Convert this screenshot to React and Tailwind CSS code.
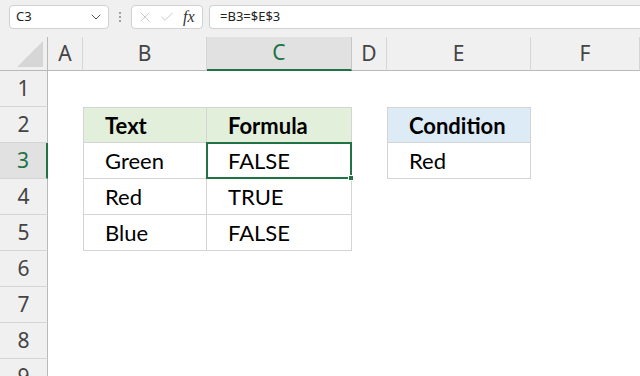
import { Fragment } from "react";
import { ChevronDown, X, Check } from "lucide-react";

const cols = ["A", "B", "C", "D", "E", "F"];
const colW = "grid-cols-[48px_35px_124px_145px_35px_144px_1fr]";

const tbl = "border-r border-b border-[#d4d4d4]";

function Cell({ children, className = "" }) {
  return (
    <div className={`flex items-center pl-[21px] text-[22px] text-black ${className}`}>
      {children}
    </div>
  );
}

function RowHead({ n, active }) {
  return (
    <div
      className={`flex items-center justify-center text-[21px] border-b ${
        active
          ? "bg-[#e1e1e1] text-[#217346] border-r-2 border-r-[#217346] border-b-[#d5d5d5]"
          : "bg-[#f0f0f0] text-[#444] border-r border-r-[#b9b9b9] border-b-[#d5d5d5]"
      }`}
    >
      {n}
    </div>
  );
}

export default function App() {
  const font = { fontFamily: "Lato, 'Noto Sans', sans-serif" };
  return (
    <div className="w-[640px] h-[376px] overflow-hidden bg-white" style={{ fontFamily: "'Noto Sans', 'Open Sans', sans-serif" }}>
      {/* formula bar */}
      <div className="h-[37px] bg-[#f0f0f0] flex items-start pt-[5px] pl-[9px]">
        <div className="w-[100px] h-[24px] bg-white border border-[#d1d1d1] rounded-[4px] flex items-center justify-between pl-[6px] pr-[4px]">
          <span className="text-[13px] text-[#222]">C3</span>
          <ChevronDown className="w-[16px] h-[16px] text-[#555]" strokeWidth={1.5} />
        </div>
        <div className="w-[22px] h-[24px] flex flex-col items-center justify-center gap-[2px]">
          <span className="w-[2px] h-[2px] bg-[#888] rounded-full"></span>
          <span className="w-[2px] h-[2px] bg-[#888] rounded-full"></span>
          <span className="w-[2px] h-[2px] bg-[#888] rounded-full"></span>
        </div>
        <div className="w-[72px] h-[24px] bg-white border border-[#d1d1d1] rounded-[4px] flex items-center pl-[5px] gap-[6px]">
          <X className="w-[16px] h-[16px] text-[#bdbdbd]" strokeWidth={1.2} />
          <Check className="w-[16px] h-[16px] text-[#bdbdbd]" strokeWidth={1.2} />
          <span className="text-[16px] italic text-[#333] ml-[2px]" style={{ fontFamily: "'Liberation Serif', serif" }}>fx</span>
        </div>
        <div className="ml-[6px] flex-1 h-[24px] bg-white border border-[#d1d1d1] border-r-0 rounded-l-[4px] flex items-center pl-[10px]">
          <span className="text-[13px] text-[#222]">=B3=$E$3</span>
        </div>
      </div>

      {/* sheet */}
      <div className={`grid ${colW} grid-rows-[34px_repeat(9,36px)]`}>
        {/* corner */}
        <div className="relative bg-[#f0f0f0] border-r border-b border-[#b9b9b9]">
          <svg className="absolute right-[4px] bottom-[3px]" width="26" height="26" viewBox="0 0 26 26">
            <polygon points="26,0 26,26 0,26" fill="#d6d6d6" />
          </svg>
        </div>
        {cols.map((c) => (
          <div
            key={c}
            className={`flex items-center justify-center text-[21px] ${
              c === "C"
                ? "bg-[#e1e1e1] text-[#217346] border-b-2 border-[#217346] border-r border-r-[#c6c6c6]"
                : "bg-[#f0f0f0] text-[#444] border-b border-b-[#b9b9b9] border-r border-r-[#d5d5d5]"
            }`}
          >
            {c}
          </div>
        ))}

        {/* row 1 */}
        <RowHead n={1} />
        <div className="col-span-6"></div>

        {/* row 2 */}
        <RowHead n={2} />
        <div></div>
        <Cell className={`${tbl} border-l border-t bg-[#e2efda] font-bold`}>
          <span style={font}>Text</span>
        </Cell>
        <Cell className={`${tbl} border-t bg-[#e2efda] font-bold`}>
          <span style={font}>Formula</span>
        </Cell>
        <div></div>
        <Cell className={`${tbl} border-l border-t bg-[#ddebf7] font-bold`}>
          <span style={font}>Condition</span>
        </Cell>
        <div></div>

        {/* row 3 */}
        <RowHead n={3} active />
        <div></div>
        <Cell className={`${tbl} border-l`}>
          <span style={font}>Green</span>
        </Cell>
        <Cell className={`${tbl} relative`}>
          <span style={font}>FALSE</span>
          <div className="absolute -left-px -top-px -right-px -bottom-px border-2 border-[#217346]"></div>
          <div className="absolute -right-[3px] -bottom-[3px] w-[6px] h-[6px] bg-[#217346] border border-white"></div>
        </Cell>
        <div></div>
        <Cell className={`${tbl} border-l`}>
          <span style={font}>Red</span>
        </Cell>
        <div></div>

        {/* row 4 */}
        <RowHead n={4} />
        <div></div>
        <Cell className={`${tbl} border-l`}>
          <span style={font}>Red</span>
        </Cell>
        <Cell className={tbl}>
          <span style={font}>TRUE</span>
        </Cell>
        <div className="col-span-3"></div>

        {/* row 5 */}
        <RowHead n={5} />
        <div></div>
        <Cell className={`${tbl} border-l`}>
          <span style={font}>Blue</span>
        </Cell>
        <Cell className={tbl}>
          <span style={font}>FALSE</span>
        </Cell>
        <div className="col-span-3"></div>

        {[6, 7, 8, 9].map((n) => (
          <Fragment key={n}>
            <RowHead n={n} />
            <div className="col-span-6"></div>
          </Fragment>
        ))}
      </div>
    </div>
  );
}
